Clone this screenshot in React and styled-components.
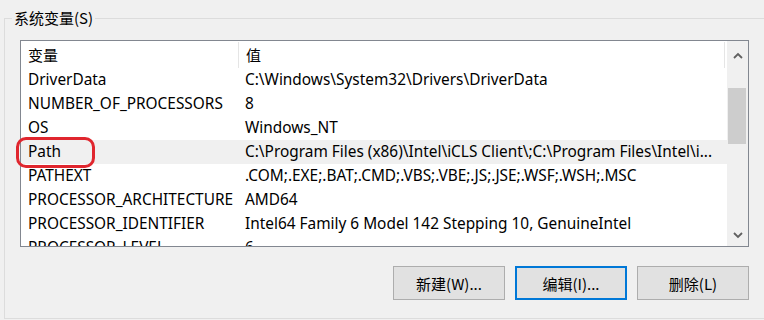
import React from 'react'
import styled, { createGlobalStyle } from 'styled-components'

const GlobalStyle = createGlobalStyle`
  html, body {
    margin: 0;
    padding: 0;
    background: #f0f0f0;
  }
  body {
    font-family: "Noto Sans", "Noto Sans CJK SC", sans-serif;
    font-size: 15.4px;
    color: #000;
  }
`

const Page = styled.div`
  width: 764px;
  height: 320px;
  overflow: hidden;
  padding-top: 18px;
  box-sizing: border-box;
`

const Group = styled.div`
  position: relative;
  margin-left: 4px;
  height: 301px;
  box-sizing: border-box;
  border: 1px solid #dcdcdc;
  border-right: none;
  padding: 21px 0 0 15px;
`

const Legend = styled.span`
  position: absolute;
  left: 7px;
  top: -11px;
  padding: 0 2px;
  background: #f0f0f0;
  line-height: 20px;
  font-size: 15px;
  font-family: "Noto Sans CJK SC", sans-serif;
`

const ListBox = styled.div`
  position: relative;
  width: 729px;
  height: 207px;
  box-sizing: border-box;
  border: 1px solid #828790;
  background: #fff;
  display: flex;
`

const Table = styled.div`
  flex: 1;
  overflow: hidden;
`

const Row = styled.div`
  display: grid;
  grid-template-columns: 217px 1fr;
  height: ${p => (p.$head ? 27 : 24)}px;
  align-items: center;
  background: ${p => (p.$hot ? '#f0f0f0' : 'transparent')};
  white-space: nowrap;
`

const Cell = styled.div`
  padding-left: 7px;
  overflow: hidden;
  text-overflow: ellipsis;
  line-height: 24px;
`

const HeadCell = styled(Cell)`
  font-family: "Noto Sans CJK SC", sans-serif;
  font-size: 15px;
  align-self: stretch;
  display: flex;
  align-items: center;
  margin-top: 1px;
  border-left: ${p => (p.$divider ? '1px solid #e5e5e5' : 'none')};
  border-right: ${p => (p.$last ? '1px solid #e5e5e5' : 'none')};
  margin-right: ${p => (p.$last ? '2px' : '0')};
`

const ScrollBar = styled.div`
  width: 21px;
  background: #f0f0f0;
  display: flex;
  flex-direction: column;
`

const Arrow = styled.div`
  height: ${p => p.$h}px;
  display: flex;
  align-items: center;
  justify-content: center;
`

const Track = styled.div`
  flex: 1;
  padding-top: 19px;
`

const Thumb = styled.div`
  height: 56px;
  margin: 0 2px 0 1px;
  background: #cdcdcd;
`

const Marker = styled.div`
  position: absolute;
  left: -5px;
  top: 96px;
  width: 79px;
  height: 31px;
  box-sizing: border-box;
  border: 3px solid #e0262e;
  border-radius: 10px;
`

const Buttons = styled.div`
  width: 729px;
  display: flex;
  justify-content: flex-end;
  gap: 10px;
  margin-top: 19px;
`

const Button = styled.button`
  width: 112px;
  height: 34px;
  box-sizing: border-box;
  background: #e1e1e1;
  border: ${p => (p.$focus ? '2px solid #0078d7' : '1px solid #adadad')};
  font-family: "Noto Sans CJK SC", sans-serif;
  font-size: 15px;
  color: #000;
  padding: 0;
`

const Chevron = ({ up }) => (
  <svg width="10" height="7" viewBox="0 0 10 7">
    <polyline
      points={up ? '1,6 5,2 9,6' : '1,1 5,5 9,1'}
      fill="none"
      stroke="#606060"
      strokeWidth="1.8"
    />
  </svg>
)

const vars = [
  ['DriverData', 'C:\\Windows\\System32\\Drivers\\DriverData'],
  ['NUMBER_OF_PROCESSORS', '8'],
  ['OS', 'Windows_NT'],
  ['Path', 'C:\\Program Files (x86)\\Intel\\iCLS Client\\;C:\\Program Files\\Intel\\i...'],
  ['PATHEXT', '.COM;.EXE;.BAT;.CMD;.VBS;.VBE;.JS;.JSE;.WSF;.WSH;.MSC'],
  ['PROCESSOR_ARCHITECTURE', 'AMD64'],
  ['PROCESSOR_IDENTIFIER', 'Intel64 Family 6 Model 142 Stepping 10, GenuineIntel'],
  ['PROCESSOR_LEVEL', '6'],
]

export default function App() {
  return (
    <Page>
      <GlobalStyle />
      <Group>
        <Legend>系统变量(S)</Legend>
        <ListBox>
          <Table>
            <Row $head>
              <HeadCell>变量</HeadCell>
              <HeadCell $divider $last>值</HeadCell>
            </Row>
            {vars.map(([name, value]) => (
              <Row key={name} $hot={name === 'Path'}>
                <Cell>{name}</Cell>
                <Cell>{value}</Cell>
              </Row>
            ))}
          </Table>
          <ScrollBar>
            <Arrow $h={28}><Chevron up /></Arrow>
            <Track><Thumb /></Track>
            <Arrow $h={22}><Chevron /></Arrow>
          </ScrollBar>
          <Marker />
        </ListBox>
        <Buttons>
          <Button>新建(W)...</Button>
          <Button $focus>编辑(I)...</Button>
          <Button>删除(L)</Button>
        </Buttons>
      </Group>
    </Page>
  )
}
